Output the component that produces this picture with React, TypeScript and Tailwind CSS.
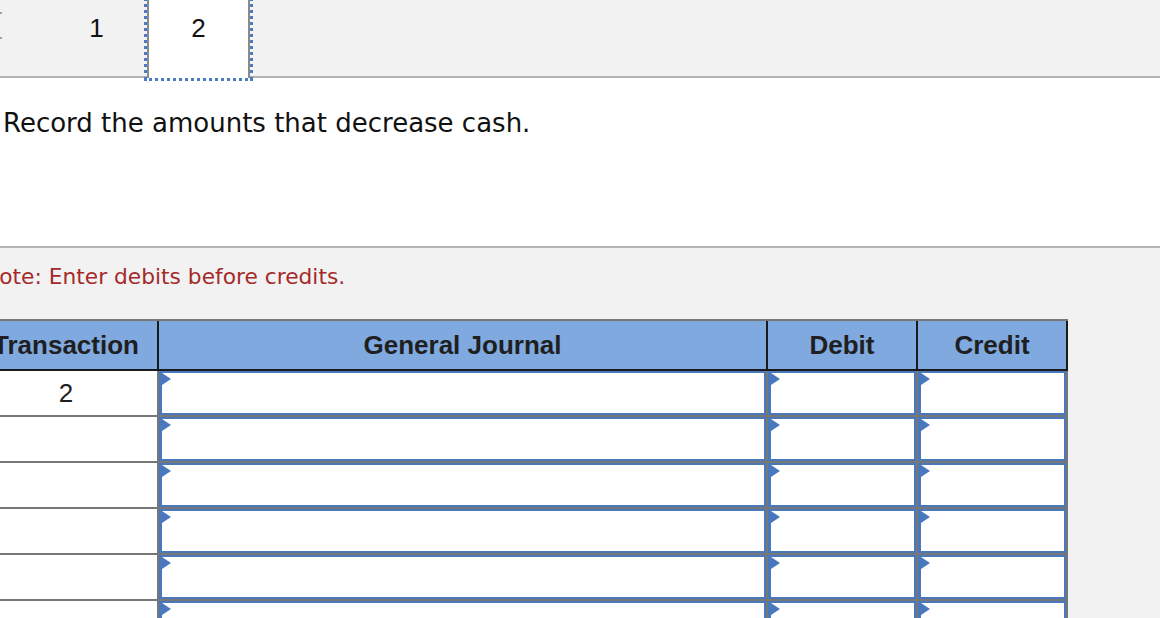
import React from 'react';

const columns = ['Transaction', 'General Journal', 'Debit', 'Credit'];
const rowCount = 8;

const EntryCell: React.FC = () => (
  <div className="relative bg-white border-2 border-l-[3px] border-[#4a78bd]">
    <svg className="absolute left-0 top-0" width="9" height="12" viewBox="0 0 9 12">
      <polygon points="0,0 9,6 0,12" fill="#4a78bd" />
    </svg>
  </div>
);

const TabBar: React.FC = () => (
  <div className="flex h-[78px] items-start border-b-2 border-[#b3b3b3] bg-[#f2f2f2] font-['Liberation_Sans',Arial,sans-serif] text-[26px] leading-[30px] text-[#111]">
    <div className="mt-[12px] h-[27px] w-[2px] border-y-2 border-[#a0a0a0]" />
    <div className="ml-[44px] w-[101px] pt-[13px] text-center">1</div>
    <div className="relative z-10 h-[78px] w-[103px] border-x-2 border-[#8a8a8a] bg-white pt-[13px] text-center outline-[3px] outline-dotted outline-[#4a7cc4]">
      2
    </div>
  </div>
);

export default function App() {
  return (
    <div className="h-[618px] w-[1160px] overflow-hidden bg-[#f2f2f2]">
      <TabBar />

      <div className="h-[170px] border-b-2 border-[#b5b5b5] bg-white pl-[3px] pt-[29px]">
        <p className="font-['DejaVu_Sans',Verdana,sans-serif] text-[26px] leading-[32px] text-[#111]">
          Record the amounts that decrease cash.
        </p>
      </div>

      <div className="pt-[16px]">
        <p className="-ml-[17px] font-['DejaVu_Sans',Verdana,sans-serif] text-[21.75px] leading-[25px] text-[#a52a2a]">
          Note: Enter debits before credits.
        </p>

        <div className="-ml-[25px] mt-[30px] w-[1093px] font-['Liberation_Sans',Arial,sans-serif] text-[26px] text-[#1f1f1f]">
          {/* header */}
          <div className="grid grid-cols-[182px_607px_148px_148px] gap-x-[2px] border-t-2 border-[#777] bg-[#1a1a1a] pb-[2px] pr-[2px]">
            {columns.map((c) => (
              <div key={c} className="flex h-[48px] items-center justify-center bg-[#80a9df] font-bold leading-none">
                {c}
              </div>
            ))}
          </div>

          {/* rows */}
          <div className="grid auto-rows-[44px] grid-cols-[182px_607px_148px_148px] gap-[2px] bg-[#777] pr-[2px]">
            {Array.from({ length: rowCount }).map((_, i) => (
              <React.Fragment key={i}>
                <div className="flex items-center justify-center bg-white leading-none">
                  {i === 0 ? '2' : ''}
                </div>
                <EntryCell />
                <EntryCell />
                <EntryCell />
              </React.Fragment>
            ))}
          </div>
        </div>
      </div>
    </div>
  );
}
